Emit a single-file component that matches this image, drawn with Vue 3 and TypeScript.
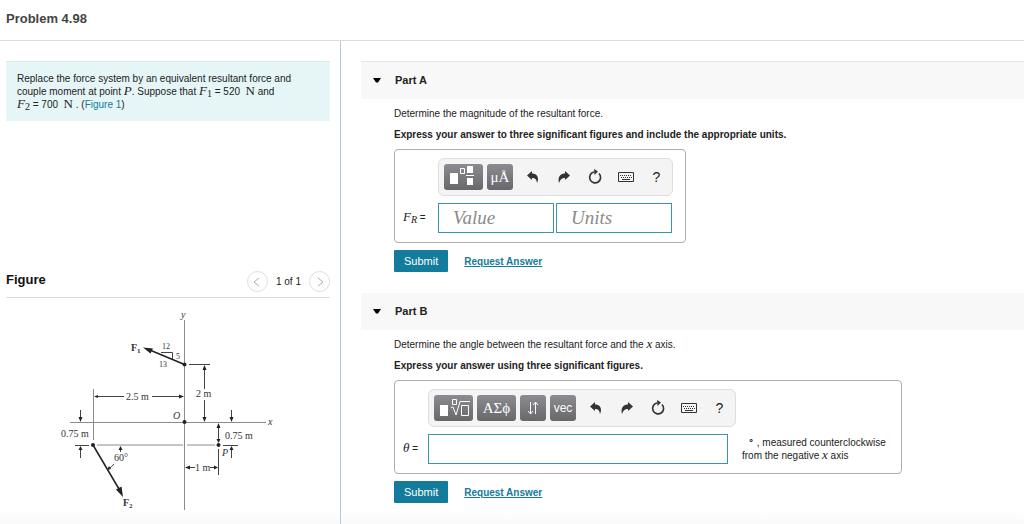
<script setup lang="ts">
interface Tool {
  name: string
  label: string
  wide?: boolean
}

interface Part {
  id: string
  title: string
  instruction: string
  tools: Tool[]
}

const parts: Part[] = [
  {
    id: 'a',
    title: 'Part A',
    instruction: 'Express your answer to three significant figures and include the appropriate units.',
    tools: [
      { name: 'template', label: 'Templates', wide: true },
      { name: 'units', label: 'Units symbols' },
    ],
  },
  {
    id: 'b',
    title: 'Part B',
    instruction: 'Express your answer using three significant figures.',
    tools: [
      { name: 'root', label: 'Templates', wide: true },
      { name: 'greek', label: 'Greek letters', wide: true },
      { name: 'arrows', label: 'Arrows' },
      { name: 'vec', label: 'Vectors' },
    ],
  },
]

const actions: Tool[] = [
  { name: 'undo', label: 'Undo' },
  { name: 'redo', label: 'Redo' },
  { name: 'reset', label: 'Reset' },
  { name: 'keyboard', label: 'Keyboard shortcuts' },
  { name: 'help', label: 'Help' },
]
</script>

<template>
  <div class="page">
    <header class="top">
      <h1>Problem 4.98</h1>
    </header>
    <div class="columns">
      <aside class="side">
        <p class="prompt">
          Replace the force system by an equivalent resultant force and couple moment at point
          <i class="math">P</i>. Suppose that <span class="term"><i class="math">F</i><sub>1</sub> = 520 &nbsp;<span class="math">N</span></span> and
          <span class="term"><i class="math">F</i><sub>2</sub> = 700 &nbsp;<span class="math">N</span> .</span> (<a href="#figure">Figure 1</a>)
        </p>
        <div class="figure-head">
          <h2>Figure</h2>
          <nav class="pager" aria-label="Figures">
            <button type="button" aria-label="Previous figure">
              <svg width="8" height="10" viewBox="0 0 8 10"><path d="M6 1 L1 5 L6 9" /></svg>
            </button>
            <span>1 of 1</span>
            <button type="button" aria-label="Next figure">
              <svg width="8" height="10" viewBox="0 0 8 10"><path d="M2 1 L7 5 L2 9" /></svg>
            </button>
          </nav>
        </div>
        <svg id="figure" class="figure" viewBox="6 298 324 220" role="img" aria-label="Force system diagram">
          <g class="axis">
            <path d="M184.500 320V510" />
            <path d="M70 422.500H266" />
            <path d="M97 445H183M187 445H215" />
            <path d="M93.500 389V440" />
          </g>
          <g class="line">
            <path d="M189 364.500H210M204.500 368V389M204.500 400V419" />
            <path d="M96 396.500H124M152 396.500H181" />
            <path d="M80.500 410V419M75 445.500H89M80.500 448V458" />
            <path d="M231.500 410V419M223 445.500H238M231.500 448V458" />
            <path d="M218.500 425V442M218.500 449V475" />
            <path d="M188 467.500H195M210 467.500H216" />
            <path d="M161 352.500H172.500V359" />
            <path d="M120.500 448V452M108 469Q112 467 114 464" />
          </g>
          <g class="force">
            <path d="M184.500 364.500L151 350.500M93 445L119 489" />
          </g>
          <g class="tips">
            <path d="M143 347.500L153 348.500L150.500 353.500Z" />
            <path d="M123 497L116 489.500L121.500 486.500Z" />
            <path d="M204.500 365L206.500 370H202.500ZM204.500 422L202.500 417H206.500Z" />
            <path d="M94 396.500L98 395V398ZM184 396.500L179 394.500V398.500Z" />
            <path d="M80.500 422L78.500 417H82.500ZM80.500 446L82.500 450H78.500Z" />
            <path d="M231.500 422L229.500 417H233.500ZM231.500 446L233.500 450H229.500Z" />
            <path d="M218.500 423L220.500 428H216.500ZM218.500 443L216.500 439H220.500Z" />
            <path d="M185 467.500L190 465.500V469.500ZM218 467.500L214 465.500V469.500Z" />
            <path d="M120.500 446L122.500 450H118.500ZM107 470L109 466L111 469Z" />
            <circle cx="184.500" cy="364.500" r="2" />
            <circle cx="184.500" cy="422" r="2" />
            <circle cx="93" cy="445" r="2" />
            <circle cx="218.500" cy="445" r="2" />
          </g>
          <g class="labels">
            <text x="181" y="318" class="it">y</text>
            <text x="268" y="425" class="it">x</text>
            <text x="173" y="419" class="it">O</text>
            <text x="222" y="456" class="it">P</text>
            <text x="131" y="351" class="bd">F<tspan class="tiny" dy="2">1</tspan></text>
            <text x="123" y="506" class="bd">F<tspan class="tiny" dy="2">2</tspan></text>
            <text x="162" y="349" class="small">12</text>
            <text x="159" y="367" class="small">13</text>
            <text x="176" y="359" class="small">5</text>
            <text x="126" y="400">2.5 m</text>
            <text x="196" y="397">2 m</text>
            <text x="61" y="437">0.75 m</text>
            <text x="225" y="439">0.75 m</text>
            <text x="195" y="471">1 m</text>
            <text x="114" y="461">60°</text>
          </g>
        </svg>
      </aside>

      <main class="main">
        <section v-for="part in parts" :key="part.id" class="part">
          <h2 class="part-head">
            <button type="button" aria-expanded="true">
              <svg width="8" height="5" viewBox="0 0 8 5"><path d="M0 0H8L5 4.500H3Z" /></svg>
              {{ part.title }}
            </button>
          </h2>
          <div class="part-body">
            <p v-if="part.id === 'a'">Determine the magnitude of the resultant force.</p>
            <p v-else>Determine the angle between the resultant force and the <i class="math">x</i> axis.</p>
            <p class="strong">{{ part.instruction }}</p>

            <form class="answer" @submit.prevent>
              <div class="box">
                <label v-if="part.id === 'a'" class="symbol-a" for="value-a"><i class="math">F<sub>R</sub></i> =</label>
                <label v-else class="symbol-b" for="value-b"><i class="math">θ</i> =</label>
                <div class="entry">
                  <div class="toolbar" role="toolbar" aria-label="Equation tools">
                    <button
                      v-for="tool in part.tools"
                      :key="tool.name"
                      type="button"
                      class="tool"
                      :class="{ wide: tool.wide }"
                      :aria-label="tool.label"
                    >
                      <svg v-if="tool.name === 'template'" width="27" height="22" viewBox="0 0 27 22">
                        <path class="fill" d="M0 7H8V18H0ZM17 0H23V7H17ZM17 12H23V19H17Z" />
                        <path class="stroke" d="M10.500 2.500H14.500V7.500H10.500ZM16 9.500H24" />
                      </svg>
                      <svg v-else-if="tool.name === 'root'" width="33" height="22" viewBox="0 0 33 22">
                        <path class="fill" d="M3 8H11V19H3Z" />
                        <path class="stroke" d="M15.500 2.500H19.500V7.500H15.500ZM14 10.500L16 10L19 18L23 4.500H33M24.500 8.500H31.500V18.500H24.500Z" />
                      </svg>
                      <svg v-else-if="tool.name === 'arrows'" width="12" height="16" viewBox="0 0 12 16">
                        <path class="stroke" d="M3.500 2V14M1 11L3.500 14L6 11M8.500 14V2M6 5L8.500 2L11 5" />
                      </svg>
                      <span v-else-if="tool.name === 'units'" class="serif">μÅ</span>
                      <span v-else-if="tool.name === 'greek'" class="serif">ΑΣϕ</span>
                      <span v-else class="sans">vec</span>
                    </button>
                    <div class="actions">
                      <button v-for="action in actions" :key="action.name" type="button" :aria-label="action.label">
                        <svg v-if="action.name === 'undo'" width="12" height="12" viewBox="0 0 12 12">
                          <path d="M0 4.500L5 0V2.500C10 2.500 12.500 6.500 10 12C9.500 8 8 7 5 7V9Z" />
                        </svg>
                        <svg v-else-if="action.name === 'redo'" width="12" height="12" viewBox="0 0 12 12">
                          <path d="M12 4.500L7 0V2.500C2 2.500 -0.500 6.500 1 12C2.500 8 4 7 7 7V9Z" />
                        </svg>
                        <svg v-else-if="action.name === 'reset'" width="14" height="16" viewBox="0 0 14 16">
                          <path class="ring" d="M11 4.500A5.500 5.500 0 1 1 6 3" />
                          <path d="M6 0L10 2.500L6.500 6Z" />
                        </svg>
                        <svg v-else-if="action.name === 'keyboard'" width="16" height="10" viewBox="0 0 16 10">
                          <path class="key" d="M0.500 0.500H15.500V9.500H0.500Z" />
                          <path class="dots" d="M2 3.500H14M3 5.500H14" />
                          <path class="key" d="M4 7.500H12" />
                        </svg>
                        <span v-else class="question">?</span>
                      </button>
                    </div>
                  </div>
                  <div class="fields">
                    <template v-if="part.id === 'a'">
                      <input id="value-a" type="text" placeholder="Value" />
                      <input type="text" placeholder="Units" aria-label="Units" />
                    </template>
                    <template v-else>
                      <input id="value-b" class="long" type="text" />
                      <span class="suffix"><span class="deg">∘</span> , measured counterclockwise<br />from the negative <i class="math">x</i> axis</span>
                    </template>
                  </div>
                </div>
              </div>
              <div class="submit-row">
                <button type="submit" class="submit">Submit</button>
                <a href="#request">Request Answer</a>
              </div>
            </form>
          </div>
        </section>
      </main>
    </div>
  </div>
</template>

<style>
body {
  margin: 0;
  background: #fff;
}
</style>

<style scoped>
.page {
  box-sizing: border-box;
  min-height: 100vh;
  display: flex;
  flex-direction: column;
  background: linear-gradient(to top, #f9f9f9, #fff 14px);
  color: #222;
  font-family: "Liberation Sans", Arial, sans-serif;
  font-size: 10px;
  line-height: 13px;
}
h1, h2, p {
  margin: 0;
}
button {
  font: inherit;
  color: inherit;
  border: 0;
  padding: 0;
  background: none;
}
a {
  color: #137c9c;
}
.math {
  font-family: "Liberation Serif", "Times New Roman", serif;
  font-size: 13px;
  line-height: 0;
}
.term {
  white-space: nowrap;
}
sub {
  font-family: "Liberation Serif", "Times New Roman", serif;
  font-size: 10px;
  line-height: 0;
  vertical-align: -2px;
}
.top {
  border-bottom: 1px solid #dcdcdc;
  padding: 11px 6px 13px;
}
h1 {
  color: #444;
  font-size: 13px;
  line-height: 16px;
}
.columns {
  flex: 1;
  display: grid;
  grid-template-columns: 341px 1fr;
}
.side {
  border-right: 1px solid #b3cadb;
  padding: 20px 10px 0 6px;
}
.prompt {
  background: #e6f6f7;
  border-top: 1px solid #dcebec;
  padding: 10px 10px 10px 11px;
}
.prompt a {
  text-decoration: none;
}
.figure-head {
  display: flex;
  justify-content: space-between;
  align-items: flex-start;
  margin-top: 150px;
  padding-bottom: 5px;
  border-bottom: 1px solid #d9d9d9;
}
.figure-head h2 {
  color: #111;
  font-size: 13px;
  line-height: 18px;
}
.pager {
  display: flex;
  align-items: center;
  gap: 8px;
}
.pager button {
  box-sizing: border-box;
  width: 21px;
  height: 21px;
  border: 1px solid #dedede;
  border-radius: 50%;
  display: grid;
  place-items: center;
}
.pager path {
  fill: none;
  stroke: #aaa;
}
.figure {
  display: block;
  width: 100%;
}
.axis {
  stroke: #8c8c8c;
  fill: none;
}
.line {
  stroke: #444;
  fill: none;
}
.force {
  stroke: #222;
  stroke-width: 1.500;
}
.tips {
  fill: #222;
}
.labels {
  fill: #333;
  font-family: "Liberation Serif", "Times New Roman", serif;
  font-size: 10px;
}
.it {
  font-style: italic;
}
.bd {
  font-weight: bold;
}
.tiny {
  font-size: 7px;
}
.small {
  font-size: 8px;
}
.main {
  padding: 20px 0 0 20px;
}
.part:first-child .part-head {
  border-top: 1px solid #e6e6e6;
}
.part + .part {
  margin-top: 21px;
}
.part-head {
  background: #f8f8f8;
  padding: 12px;
  font-size: 11px;
  line-height: 13px;
}
.part-head button {
  display: flex;
  align-items: center;
  gap: 14px;
  font-weight: bold;
}
.part-body {
  padding: 7px 10px 0 33px;
}
.part-body p {
  line-height: 15px;
}
.part-body .strong {
  font-weight: bold;
  margin-top: 6px;
}
.box {
  box-sizing: border-box;
  width: max-content;
  display: flex;
  align-items: flex-end;
  gap: 10px;
  margin-top: 7px;
  padding: 8px 12px 9px 8px;
  border: 1px solid #adadad;
  border-radius: 4px;
}
.box label {
  line-height: 30px;
  white-space: nowrap;
}
.symbol-a {
  width: 25px;
}
.symbol-b {
  width: 15px;
}
.toolbar {
  box-sizing: border-box;
  width: max-content;
  display: flex;
  align-items: center;
  gap: 4px;
  padding: 5px 0 5px 5px;
  border: 1px solid #dedede;
  border-radius: 6px;
  background: #f4f4f4;
}
.tool {
  width: 26px;
  height: 26px;
  border-radius: 3px;
  background: linear-gradient(#8c8b91, #68686b);
  color: #fff;
  display: grid;
  place-items: center;
}
.wide {
  width: 39px;
}
.fill {
  fill: #fff;
}
.stroke {
  fill: none;
  stroke: #fff;
}
.serif {
  font-family: "Liberation Serif", "Times New Roman", serif;
  font-size: 15px;
}
.sans {
  font-size: 12px;
}
.actions {
  display: flex;
}
.actions button {
  width: 31px;
  height: 26px;
  display: grid;
  place-items: center;
}
.actions path {
  fill: #333;
}
.actions .ring {
  fill: none;
  stroke: #333;
  stroke-width: 1.700;
}
.actions .key,
.actions .dots {
  fill: none;
  stroke: #333;
}
.actions .dots {
  stroke-dasharray: 1 1;
}
.question {
  font-size: 14px;
}
.fields {
  display: flex;
  align-items: center;
  gap: 2px;
  margin-top: 7px;
}
input {
  box-sizing: border-box;
  width: 116px;
  height: 30px;
  margin: 0;
  padding: 0 14px;
  border: 1px solid #3b93ad;
  background: #fff;
  font-family: "Liberation Serif", "Times New Roman", serif;
  font-size: 19px;
}
input::placeholder {
  color: #8a8a8a;
  font-style: italic;
  opacity: 1;
}
.long {
  width: 300px;
}
.suffix {
  min-width: 147px;
  padding-left: 12px;
}
.deg {
  padding-left: 6px;
  line-height: 0;
  vertical-align: 3px;
}
.submit-row {
  display: flex;
  align-items: center;
  gap: 16px;
  margin-top: 7px;
}
.submit {
  height: 22px;
  padding: 0 10px;
  border-radius: 1px;
  background: #137c9c;
  color: #fff;
  font-size: 11px;
}
.submit-row a {
  font-weight: bold;
}
</style>
